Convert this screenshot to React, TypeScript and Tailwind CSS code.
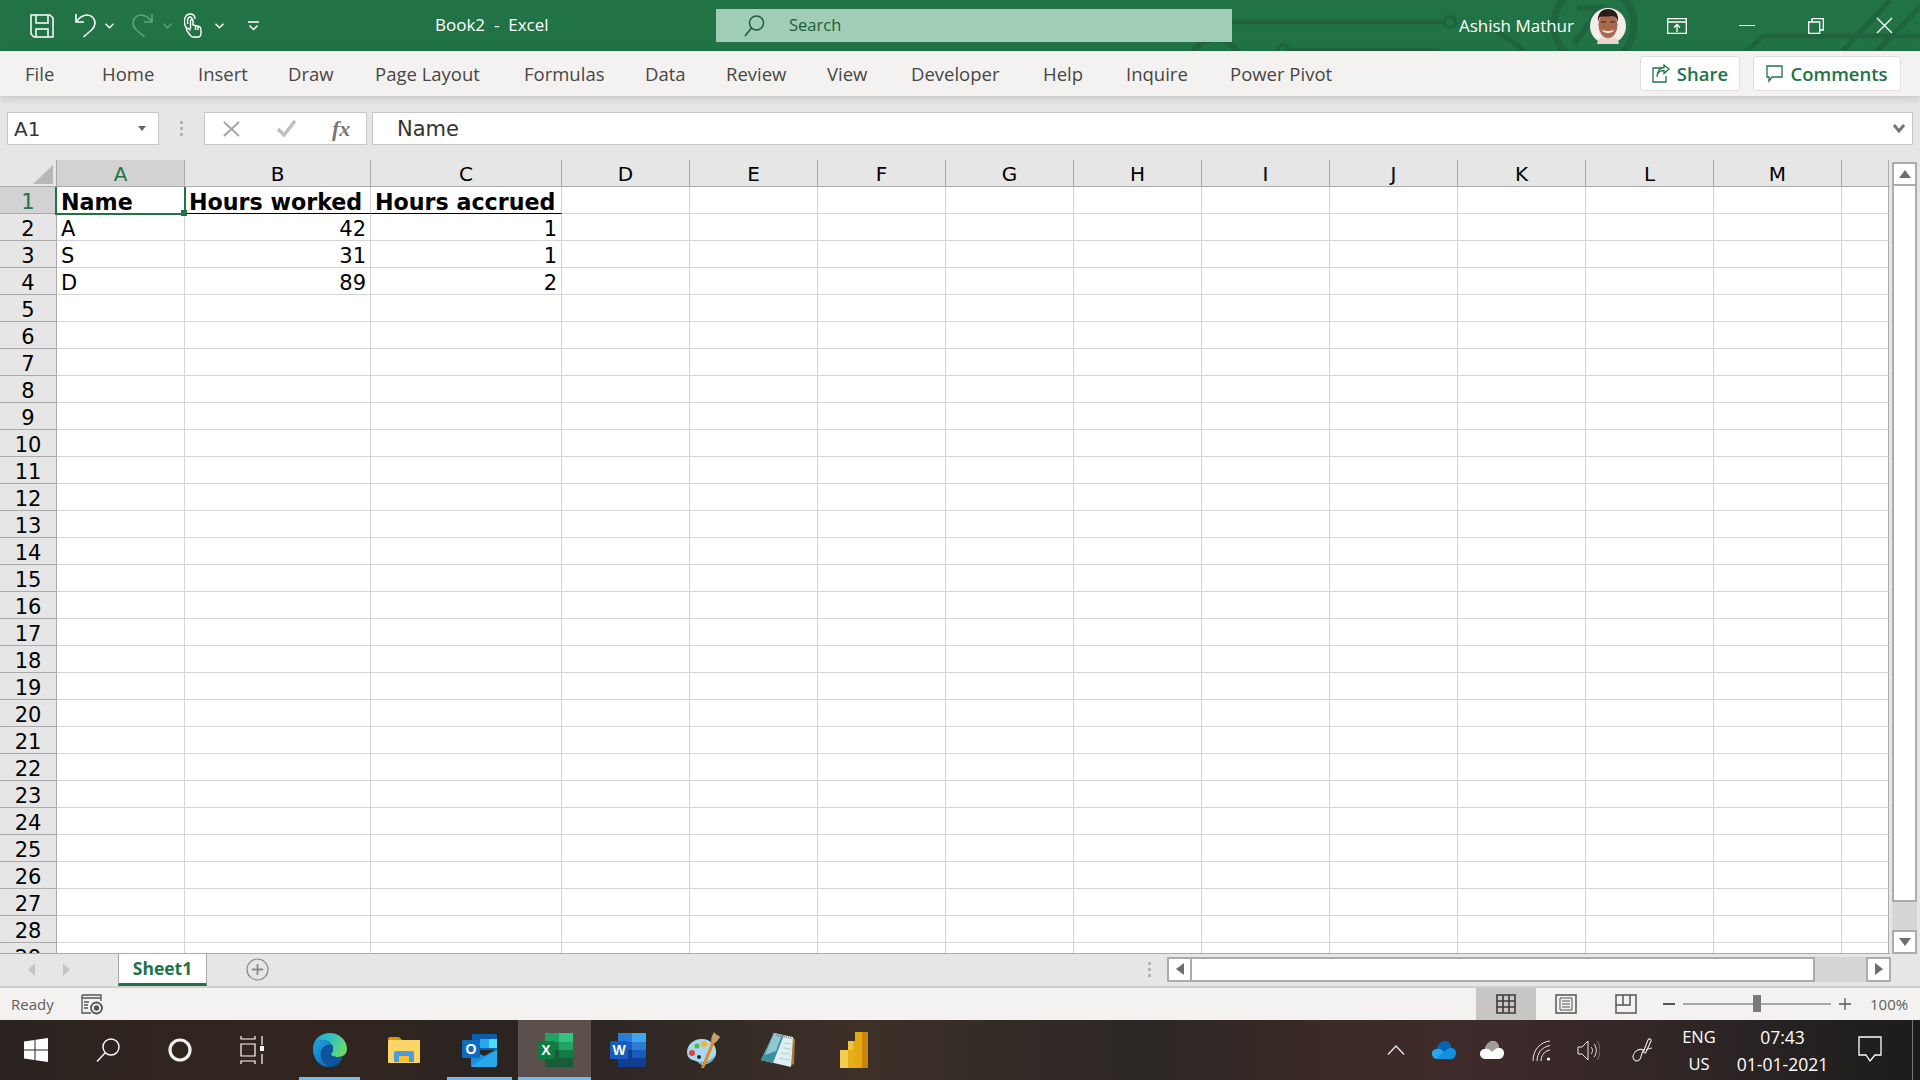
import { ReactNode } from "react"

const columns = [
  { label: "A", width: "w-[128px]", active: true },
  { label: "B", width: "w-[186px]" },
  { label: "C", width: "w-[191px]" },
  { label: "D", width: "w-[128px]" },
  { label: "E", width: "w-[128px]" },
  { label: "F", width: "w-[128px]" },
  { label: "G", width: "w-[128px]" },
  { label: "H", width: "w-[128px]" },
  { label: "I", width: "w-[128px]" },
  { label: "J", width: "w-[128px]" },
  { label: "K", width: "w-[128px]" },
  { label: "L", width: "w-[128px]" },
  { label: "M", width: "w-[128px]" },
  { label: "", width: "w-[47px]" },
]

const sheetData: Record<number, (string | number)[]> = {
  1: ["Name", "Hours worked", "Hours accrued"],
  2: ["A", 42, 1],
  3: ["S", 31, 1],
  4: ["D", 89, 2],
}

const tabs = [
  { label: "File", width: "w-[77px]" },
  { label: "Home", width: "w-[96px]" },
  { label: "Insert", width: "w-[90px]" },
  { label: "Draw", width: "w-[87px]" },
  { label: "Page Layout", width: "w-[149px]" },
  { label: "Formulas", width: "w-[121px]" },
  { label: "Data", width: "w-[81px]" },
  { label: "Review", width: "w-[101px]" },
  { label: "View", width: "w-[84px]" },
  { label: "Developer", width: "w-[132px]" },
  { label: "Help", width: "w-[83px]" },
  { label: "Inquire", width: "w-[104px]" },
  { label: "Power Pivot", width: "w-[130px]" },
]

function Chevron({ className = "" }: { className?: string }) {
  return (
    <svg width="9" height="6" viewBox="0 0 9 6" className={className}>
      <path d="M0.5 0.7 L4.5 4.7 L8.5 0.7" fill="none" stroke="currentColor" strokeWidth="1.4" />
    </svg>
  )
}

function UndoIcon({ flip = false }: { flip?: boolean }) {
  return (
    <svg width="23" height="25" viewBox="0 0 23 25" className={flip ? "-scale-x-100" : ""}>
      <path
        d="M2 1V9H10 M2 9C5 5 9 2 13 2C18 2 21 6 21 10C21 13 19.5 15 18 16.5L9.5 24"
        fill="none"
        stroke="currentColor"
        strokeWidth="1.6"
      />
    </svg>
  )
}

function TitleBar() {
  return (
    <header className="relative h-[51px] shrink-0 overflow-hidden bg-[#217346] text-white">
      {/* circuit pattern */}
      <svg className="absolute inset-0" width="1920" height="51" viewBox="0 0 1920 51" fill="none" stroke="#20643f">
        <path d="M1232 22H1445" strokeWidth="5" />
        <circle cx="1450" cy="22" r="5.5" strokeWidth="3.5" />
        <circle cx="1215" cy="64" r="25" strokeWidth="6" />
        <circle cx="1283" cy="50" r="5.5" strokeWidth="3.5" />
        <path d="M1290 50H1436L1440 51" strokeWidth="4" />
        <path d="M1497 31L1525 51" strokeWidth="5" />
        <circle cx="1594" cy="25" r="40" strokeWidth="7" />
        <path d="M1577 8H1600L1574 44" strokeWidth="6" />
        <path d="M1746 52L1763 36H1920" strokeWidth="5" />
        <path d="M1843 51L1890 0M1877 51L1922 5" strokeWidth="5" />
      </svg>

      <div className="relative flex h-full items-center">
        <div className="flex w-[435px] items-center pl-[30px]">
          <svg width="24" height="24" viewBox="0 0 24 24" fill="none" stroke="currentColor" strokeWidth="1.5">
            <path d="M1 1H20L23 4V23H4L1 20Z" />
            <path d="M6 1V9H18V1M6 23V15H18V23" />
          </svg>
          <div className="ml-[20px]"><UndoIcon /></div>
          <Chevron className="ml-[8px]" />
          <div className="ml-[17px] text-[#5fa27e]"><UndoIcon flip /></div>
          <Chevron className="ml-[9px] text-[#5fa27e]" />
          <svg className="ml-[12px]" width="18" height="25" viewBox="0 0 18 25" fill="none" stroke="currentColor" strokeWidth="1.4">
            <path d="M3 16C0 12 0 8 1 5C2 2 4 1 6 1C9 1 11 3 11 6" />
            <path d="M4 11C3 8 3.5 4 6 4C8 4 8.5 6 8.5 8" />
            <path d="M6.5 16V7.5C6.5 6 9 6 9 7.5V12L15 13.5C16.5 14 17 15 17 16.5V20C17 22 16 24 14 24H9C7 24 6 22 4.5 20L2.5 17C2 15.5 4 14.5 5 16L6.5 17.5" />
            <path d="M11.5 13V17M14 13.5V17" />
          </svg>
          <Chevron className="ml-[13px]" />
          <svg className="ml-[24px]" width="11" height="10" viewBox="0 0 11 10" fill="none" stroke="currentColor" strokeWidth="1.5">
            <path d="M0 1H11M1.5 4.5L5.5 8.5L9.5 4.5" />
          </svg>
        </div>
        <div className="w-[281px] pb-[2px] text-[17px]">Book2&nbsp; -&nbsp; Excel</div>
        <div className="flex h-[33px] w-[516px] items-center bg-[#a0cdb5] text-[16.5px] text-[#1d5c3a]">
          <svg className="ml-[28px]" width="21" height="22" viewBox="0 0 21 22" fill="none" stroke="currentColor" strokeWidth="1.5">
            <circle cx="12.5" cy="8" r="7" />
            <path d="M7.5 13L1 21" />
          </svg>
          <span className="ml-[24px]">Search</span>
        </div>
        <div className="ml-auto flex items-center pr-[27px]">
          <span className="text-[17px]">Ashish Mathur</span>
          <svg className="ml-[16px]" width="36" height="36" viewBox="0 0 36 36">
            <circle cx="18" cy="18" r="18" fill="#f4ece8" />
            <path d="M7 36C8 29 13 28 18 28C23 28 28 29 29 36Z" fill="#e9d6d0" />
            <ellipse cx="18" cy="17" rx="9.5" ry="13" fill="#a8694e" />
            <path d="M8 14C7 5 12 1 18 1C25 1 29 6 28 14C27 10 25 8 22 8C18 9 12 8 10 9C9 10 8.5 12 8 14Z" fill="#2b1c1e" />
            <path d="M11 14H16M20 14H25" stroke="#5c3a30" strokeWidth="1.5" />
            <path d="M12.5 22.5C15 25 21 25 23.5 22.5C21 24 15 24 12.5 22.5Z" fill="#f7eee9" stroke="#f7eee9" />
          </svg>
          <svg className="ml-[41px]" width="20" height="16" viewBox="0 0 20 16" fill="none" stroke="currentColor" strokeWidth="1.3">
            <path d="M0.7 0.7H19.3V15.3H0.7ZM0.7 4H19.3" />
            <path d="M10 14V7M7 9.5L10 6.5L13 9.5" />
          </svg>
          <div className="ml-[52px] h-[1.5px] w-[16px] bg-white" />
          <svg className="ml-[53px]" width="16" height="16" viewBox="0 0 16 16" fill="none" stroke="currentColor" strokeWidth="1.3">
            <path d="M0.7 4H11.7V15.3H0.7ZM4 4V0.7H15.3V12H11.7" />
          </svg>
          <svg className="ml-[52px]" width="17" height="17" viewBox="0 0 17 17" fill="none" stroke="currentColor" strokeWidth="1.4">
            <path d="M1 1L16 16M16 1L1 16" />
          </svg>
        </div>
      </div>
    </header>
  )
}

function Ribbon() {
  return (
    <nav className="relative z-10 flex h-[45px] shrink-0 items-center bg-[#f3f2f1] pl-[25px] pr-[19px] shadow-[0_3px_8px_rgba(0,0,0,0.14)]">
      {tabs.map((t) => (
        <div key={t.label} className={`${t.width} whitespace-nowrap text-[18.5px] text-[#484644]`}>
          {t.label}
        </div>
      ))}
      <div className="ml-auto flex gap-[13px]">
        <button className="flex h-[35px] w-[100px] items-center justify-center gap-[7px] rounded-[3px] border border-[#e1dfdd] bg-white text-[18.5px] font-semibold text-[#217346]">
          <svg width="18" height="19" viewBox="0 0 18 19" fill="none" stroke="currentColor" strokeWidth="1.3">
            <path d="M9 4H1V18H14V12" />
            <path d="M5 13C5 9 8 6.5 12 6.5V9.5L17 5L12 1V3.5C7.5 3.5 5 8 5 13Z" />
          </svg>
          Share
        </button>
        <button className="flex h-[35px] w-[148px] items-center justify-center gap-[7px] rounded-[3px] border border-[#e1dfdd] bg-white text-[18.5px] font-semibold text-[#217346]">
          <svg width="17" height="18" viewBox="0 0 17 18" fill="none" stroke="currentColor" strokeWidth="1.3">
            <path d="M1 1H16V12H6L3 16V12H1Z" />
          </svg>
          Comments
        </button>
      </div>
    </nav>
  )
}

function FormulaBar() {
  return (
    <div className="flex h-[64px] shrink-0 items-start bg-[#e6e6e6] pl-[7px] pr-[7px] pt-[16px]">
      <div className="flex h-[33px] w-[152px] items-center justify-between border border-[#c6c6c6] bg-white pl-[6px] pr-[12px] font-['DejaVu_Sans',sans-serif] text-[20px] text-[#333]">
        A1
        <svg width="8" height="5" viewBox="0 0 8 5"><path d="M0 0H8L4 5Z" fill="#666" /></svg>
      </div>
      <div className="flex h-[33px] w-[45px] flex-col items-center justify-center gap-[3px]">
        <div className="h-[3px] w-[3px] bg-[#b5b5b5]" />
        <div className="h-[3px] w-[3px] bg-[#b5b5b5]" />
        <div className="h-[3px] w-[3px] bg-[#b5b5b5]" />
      </div>
      <div className="flex h-[33px] w-[163px] items-center border border-[#c6c6c6] bg-white pl-[18px]">
        <svg width="17" height="16" viewBox="0 0 17 16" fill="none" stroke="#a6a6a6" strokeWidth="2"><path d="M1 1L16 15M16 1L1 15" /></svg>
        <svg className="ml-[37px]" width="20" height="17" viewBox="0 0 20 17" fill="none" stroke="#c0c0c0" strokeWidth="3.5"><path d="M1 9L7 15L18 1" /></svg>
        <span className="ml-[35px] font-['Liberation_Serif',serif] text-[22px] font-semibold italic leading-none text-[#777]">fx</span>
      </div>
      <div className="ml-[5px] flex h-[33px] flex-1 items-center justify-between border border-[#c6c6c6] bg-white pl-[24px] pr-[7px] font-['DejaVu_Sans',sans-serif] text-[21px] text-[#333]">
        <span className="pt-[2px]">Name</span>
        <svg width="12" height="9" viewBox="0 0 12 9" fill="none" stroke="#777" strokeWidth="3"><path d="M1 1L6 7L11 1" /></svg>
      </div>
    </div>
  )
}

function ColumnHeader() {
  return (
    <div className="flex h-[27px] shrink-0 border-b border-[#ababab] bg-[#e6e6e6] font-['DejaVu_Sans',sans-serif] text-[20px] leading-[26px]">
      <div className="flex w-[57px] items-end justify-end border-r border-[#ababab] pb-[2px] pr-[3px]">
        <svg width="20" height="19" viewBox="0 0 20 19"><path d="M20 0V19H0Z" fill="#b8b8b8" /></svg>
      </div>
      {columns.map((c, i) => (
        <div
          key={i}
          className={`${c.width} border-r border-[#ababab] pt-[1px] text-center ${c.active ? "bg-[#d2d2d2] text-[#217346]" : "text-black"}`}
        >
          {c.label}
        </div>
      ))}
    </div>
  )
}

function Row({ n }: { n: number }) {
  const values = sheetData[n] ?? []
  return (
    <div className="flex h-[27px] shrink-0">
      <div
        className={`flex w-[57px] shrink-0 items-center justify-center border-b border-r border-[#ababab] pt-[5px] text-[21px] ${n === 1 ? "bg-[#d2d2d2] text-[#217346]" : "bg-[#e6e6e6] text-black"}`}
      >
        {n}
      </div>
      {columns.map((c, i) => {
        const v = values[i]
        return (
          <div
            key={i}
            className={`relative flex shrink-0 items-center whitespace-nowrap border-b border-r bg-white px-[4px] pt-[5px] ${c.width} ${n === 1 && i < 3 ? "border-b-black" : "border-b-[#d4d4d4]"} ${i === 13 ? "border-r-[#ababab]" : "border-r-[#d4d4d4]"} ${n === 1 ? "text-[22.2px] font-bold" : "text-[21px]"} ${typeof v === "number" ? "justify-end" : ""} text-black`}
          >
            {v}
            {n === 1 && i === 0 && (
              <div className="absolute -left-[2px] -top-[2px] z-10 h-[30px] w-[131px] border-2 border-[#217346]">
                <div className="absolute -bottom-[3px] -right-[3px] h-[6px] w-[6px] bg-[#217346]" />
              </div>
            )}
          </div>
        )
      })}
    </div>
  )
}

function ScrollArrow({ dir }: { dir: "up" | "down" | "left" | "right" }) {
  const points = { up: "0,8 12,8 6,0", down: "0,0 12,0 6,8", left: "8,0 8,12 0,6", right: "0,0 0,12 8,6" }
  return (
    <svg width="12" height="12" viewBox="0 0 12 12">
      <polygon points={points[dir]} transform={dir === "left" || dir === "right" ? "translate(2,0)" : "translate(0,2)"} fill="#6d6d6d" />
    </svg>
  )
}

function Grid() {
  const rows = Array.from({ length: 29 }, (_, i) => i + 1)
  return (
    <div className="flex h-[794px] shrink-0 flex-col overflow-hidden bg-[#e6e6e6]">
      <div className="flex h-full">
        <div className="flex w-[1890px] flex-col font-['DejaVu_Sans',sans-serif]">
          <ColumnHeader />
          <div className="h-[767px] overflow-hidden border-b border-[#ababab]">
            {rows.map((n) => (
              <Row key={n} n={n} />
            ))}
          </div>
        </div>
        <div className="flex h-full w-[30px] flex-col pl-[2px] pr-[3px] pt-[2px]">
          <div className="flex h-[24px] items-center justify-center border-2 border-[#ababab] border-b-[#ababab] bg-white">
            <ScrollArrow dir="up" />
          </div>
          <div className="h-[716px] border-x-2 border-b-2 border-[#ababab] bg-white" />
          <div className="flex-1 bg-[#d6d6d6]" />
          <div className="flex h-[24px] items-center justify-center border-2 border-[#ababab] bg-white">
            <ScrollArrow dir="down" />
          </div>
        </div>
      </div>
    </div>
  )
}

function SheetTabs() {
  return (
    <div className="flex h-[34px] shrink-0 items-center border-b-2 border-[#cfcfcf] bg-[#e6e6e6] pb-[2px]">
      <svg className="ml-[28px]" width="7" height="13" viewBox="0 0 7 13"><path d="M7 0V13L0 6.5Z" fill="#c4c4c4" /></svg>
      <svg className="ml-[28px]" width="7" height="13" viewBox="0 0 7 13"><path d="M0 0V13L7 6.5Z" fill="#c4c4c4" /></svg>
      <div className="ml-[48px] flex h-[32px] w-[89px] items-center justify-center self-start border-x border-b-[3px] border-[#a6a6a6] border-b-[#217346] bg-white text-[17.5px] font-bold text-[#217346]">
        Sheet1
      </div>
      <svg className="ml-[39px]" width="23" height="23" viewBox="0 0 23 23" fill="none" stroke="#8a8a8a">
        <circle cx="11.5" cy="11.5" r="10.5" strokeWidth="1.2" />
        <path d="M11.5 6V17M6 11.5H17" strokeWidth="1.8" />
      </svg>
      <div className="ml-[879px] flex flex-col gap-[3px]">
        <div className="h-[3px] w-[3px] bg-[#b5b5b5]" />
        <div className="h-[3px] w-[3px] bg-[#b5b5b5]" />
        <div className="h-[3px] w-[3px] bg-[#b5b5b5]" />
      </div>
      <div className="ml-[16px] flex h-[25px] items-stretch">
        <div className="flex w-[25px] items-center justify-center border-2 border-[#ababab] bg-white">
          <ScrollArrow dir="left" />
        </div>
        <div className="w-[623px] border-y-2 border-r-2 border-[#ababab] bg-white" />
        <div className="w-[51px] bg-[#d6d6d6]" />
        <div className="flex w-[25px] items-center justify-center border-2 border-[#ababab] bg-white">
          <ScrollArrow dir="right" />
        </div>
      </div>
    </div>
  )
}

function StatusBar() {
  return (
    <div className="flex h-[32px] shrink-0 items-center bg-[#f3f2f1] pl-[11px] text-[15px] text-[#605e5c]">
      <span className="w-[70px]">Ready</span>
      <svg width="22" height="21" viewBox="0 0 22 21" fill="none" stroke="#555" strokeWidth="1.3">
        <path d="M1 1H20V7M1 4H20M1 1V19H10" />
        <path d="M3 8H8M3 11H7M3 14H7" />
        <circle cx="15.5" cy="14" r="5.5" strokeWidth="1.8" />
        <circle cx="15.5" cy="14" r="2" fill="#555" />
      </svg>
      <div className="ml-auto flex h-full items-center">
        <div className="flex h-full w-[60px] items-center justify-center bg-[#c8c6c4]">
          <svg width="20" height="20" viewBox="0 0 20 20" fill="none" stroke="#3b3a39" strokeWidth="1.6">
            <path d="M1 1H19V19H1ZM7 1V19M13 1V19M1 7H19M1 13H19" />
          </svg>
        </div>
        <div className="flex h-full w-[60px] items-center justify-center">
          <svg width="22" height="20" viewBox="0 0 22 20" fill="none" stroke="#555">
            <path d="M1 1H21V19H1Z" strokeWidth="1.5" />
            <path d="M5 4H17V16H5Z" strokeWidth="1" />
            <path d="M7 7H15M7 10H15M7 13H15" strokeWidth="1.2" />
          </svg>
        </div>
        <div className="flex h-full w-[60px] items-center justify-center">
          <svg width="22" height="20" viewBox="0 0 22 20" fill="none" stroke="#555" strokeWidth="1.5">
            <path d="M1 1H21V19H1ZM8 1V11H1M8 11H15V1" />
          </svg>
        </div>
        <div className="ml-[7px] h-[1.5px] w-[12px] bg-[#555]" />
        <div className="relative ml-[8px] flex h-[2px] w-[148px] bg-[#a8a8a8]">
          <div className="absolute left-[70px] -top-[8px] h-[17px] w-[8px] bg-[#7a7a7a]" />
        </div>
        <svg className="ml-[8px]" width="12" height="12" viewBox="0 0 12 12" stroke="#555" strokeWidth="1.3"><path d="M6 0V12M0 6H12" /></svg>
        <span className="ml-[19px] w-[50px] text-[15px]">100%</span>
      </div>
    </div>
  )
}

function EdgeLogo() {
  return (
    <svg width="36" height="36" viewBox="0 0 36 36">
      <defs>
        <linearGradient id="edgeTop" x1="0" y1="0" x2="1" y2="0.3">
          <stop offset="0" stopColor="#1b9de2" />
          <stop offset="0.55" stopColor="#35c1c0" />
          <stop offset="1" stopColor="#66d86e" />
        </linearGradient>
        <linearGradient id="edgeLeft" x1="0" y1="0" x2="0.6" y2="1">
          <stop offset="0" stopColor="#1fa5e8" />
          <stop offset="1" stopColor="#0d6ebd" />
        </linearGradient>
      </defs>
      <path d="M18 1C27 1 35 8 35 17C35 22 31 25 26 25C22 25 19 24 19 22C19 21 21 20 21 17C21 12 16 8 11 8C7 8 3 10 1 15C2 7 9 1 18 1Z" fill="url(#edgeTop)" />
      <path d="M1 15C3 10 7 8 11 8C14 8 18 10 20 13C15 12 10 15 9 20C8 26 12 33 19 35C9 36 0 28 1 15Z" fill="url(#edgeLeft)" />
      <path d="M9 20C10 15 15 12 20 13C21 14 21 15 21 17C21 20 19 21 19 22C19 24 22 25 26 25C28 25 30 25 31 24C29 31 24 35 19 35C12 33 8 26 9 20Z" fill="#0c559e" />
    </svg>
  )
}

function FolderLogo() {
  return (
    <svg width="32" height="26" viewBox="0 0 32 26">
      <path d="M0 2C0 1 1 0 2 0H11L14 3H32V5H0Z" fill="#d9980a" />
      <rect x="0" y="3" width="32" height="23" rx="1" fill="#fcd565" />
      <path d="M6 25V16C6 15 7 14 8 14H24C25 14 26 15 26 16V25H21V19H11V25Z" fill="#4a9cdc" />
      <rect x="11" y="19" width="10" height="6" fill="#fbc02d" />
    </svg>
  )
}

function OutlookLogo() {
  return (
    <svg width="36" height="34" viewBox="0 0 36 34">
      <rect x="10" y="1" width="25" height="16" fill="#0a5cb0" rx="1" />
      <rect x="18" y="6" width="9" height="9" fill="#28a8ea" />
      <rect x="27" y="6" width="8" height="9" fill="#50d9ff" />
      <rect x="10" y="9" width="8" height="8" fill="#0f78d4" />
      <path d="M9 16L22 23L35 16V32C35 33 34 34 33 34H11C10 34 9 33 9 32Z" fill="#1490df" />
      <path d="M9 33L35 17V32C35 33 34 34 33 34H11C10 34 9 34 9 33Z" fill="#28a8ea" />
      <rect x="0" y="7" width="18" height="18" rx="1.5" fill="#0f6cbd" />
      <text x="9" y="21" textAnchor="middle" fontFamily="'Liberation Sans', sans-serif" fontWeight="700" fontSize="14" fill="#fff">O</text>
    </svg>
  )
}

function OfficeLogo({ letter, colors, dark }: { letter: string; colors: string[]; dark: string }) {
  return (
    <svg width="36" height="34" viewBox="0 0 36 34">
      <rect x="8" y="0" width="28" height="34" rx="1.5" fill={colors[1]} />
      <rect x="22" y="0" width="14" height="9" fill={colors[0]} />
      <rect x="8" y="0" width="14" height="9" fill={colors[1]} />
      <rect x="22" y="9" width="14" height="8" fill={colors[1]} />
      <rect x="8" y="9" width="14" height="8" fill={colors[2]} />
      <rect x="22" y="17" width="14" height="8" fill={colors[2]} />
      <rect x="8" y="17" width="14" height="8" fill={colors[3]} />
      <rect x="8" y="25" width="28" height="9" fill={colors[3]} />
      <rect x="0" y="8" width="18" height="18" rx="1.5" fill={dark} />
      <text x="9" y="22" textAnchor="middle" fontFamily="'Liberation Sans', sans-serif" fontWeight="700" fontSize="14" fill="#fff">{letter}</text>
    </svg>
  )
}

function PaintLogo() {
  return (
    <svg width="36" height="36" viewBox="0 0 36 36">
      <path d="M2 20C2 12 10 6 18 7C27 8 32 14 31 22C30 28 24 32 18 33C15 33 14 30 11 29C6 28 2 26 2 20Z" fill="#a9d8ef" />
      <path d="M18 33C24 32 30 28 31 22C28 27 23 30 14 30C15 32 16 33 18 33Z" fill="#6eaed0" />
      <circle cx="7" cy="21" r="3" fill="#e2433e" />
      <circle cx="12" cy="14" r="2.6" fill="#5bb54a" />
      <circle cx="19" cy="12" r="3" fill="#f2b12e" />
      <circle cx="14" cy="25" r="2" fill="#1f2a33" />
      <path d="M16 36L27 9L30 10L19 36Z" fill="#e88a1f" />
      <path d="M26 9C26 5 28 2 29 0C31 3 35 4 35 5C33 8 31 11 29 11Z" fill="#c9a06a" />
    </svg>
  )
}

function NotepadLogo() {
  return (
    <svg width="34" height="34" viewBox="0 0 34 34">
      <path d="M31 4L34 6L33 31L29 33Z" fill="#a67c2e" />
      <path d="M13 0L32 4L30 34L0 27Z" fill="#dfeef2" />
      <path d="M13 0L23 2L12 30L0 27Z" fill="#3a8f9f" />
      <path d="M13 0L21 2L15 18L4 22Z" fill="#8ec7d1" />
      <path d="M15 2L31 5" stroke="#8a8a8a" strokeWidth="2" strokeDasharray="1 1" />
      <path d="M23 10L30 11M22 15L30 16M20 20L29 21M18 25L29 27" stroke="#b5cfd6" strokeWidth="1.2" />
    </svg>
  )
}

function PowerBiLogo() {
  return (
    <svg className="ml-[4px]" width="28" height="36" viewBox="0 0 28 36">
      <rect x="0" y="18" width="12" height="18" fill="#f2cf52" />
      <rect x="8" y="9" width="12" height="27" fill="#e8ae1a" />
      <rect x="15" y="0" width="13" height="36" fill="#c9850e" />
      <rect x="15" y="0" width="7" height="36" fill="#e3a70f" />
      <rect x="8" y="9" width="5" height="9" fill="#f0c43a" />
    </svg>
  )
}

function TaskSlot({ width, active, open, children }: { width: string; active?: boolean; open?: boolean; children: ReactNode }) {
  return (
    <div className={`relative flex h-full items-center justify-center pb-[1px] ${width} ${active ? "bg-[#5b504c]" : ""}`}>
      {children}
      {open && <div className={`absolute bottom-0 h-[3px] bg-[#76b9ed] ${active ? "inset-x-0" : "inset-x-[6px]"}`} />}
    </div>
  )
}

function Taskbar() {
  return (
    <footer className="flex h-[60px] shrink-0 items-center bg-[linear-gradient(90deg,#2b2320_0%,#33251f_14%,#2a2422_28%,#3d3029_45%,#2c2724_60%,#3d2b27_70%,#3e2a2b_78%,#2c2424_90%,#1c1c1c_100%)] font-['Open_Sans',sans-serif] text-white">
      <TaskSlot width="w-[72px]">
        <svg width="24" height="24" viewBox="0 0 24 24" fill="#fff"><path d="M0 3.5L10.5 2V11.5H0ZM11.5 1.8L24 0V11.5H11.5ZM0 12.5H10.5V22L0 20.5ZM11.5 12.5H24V24L11.5 22.2Z" /></svg>
      </TaskSlot>
      <TaskSlot width="w-[72px]">
        <svg width="24" height="24" viewBox="0 0 24 24" fill="none" stroke="#fff" strokeWidth="1.4"><circle cx="15" cy="9" r="8" /><path d="M9 15L1 23.5" /></svg>
      </TaskSlot>
      <TaskSlot width="w-[72px]">
        <svg width="24" height="24" viewBox="0 0 24 24" fill="none" stroke="#f0f0f0" strokeWidth="3.2"><circle cx="12" cy="12" r="10" /></svg>
      </TaskSlot>
      <TaskSlot width="w-[71px]">
        <svg width="24" height="28" viewBox="0 0 24 28" fill="none" stroke="#fff" strokeWidth="1.2">
          <path d="M1 0V3H15V0M1 8H15V20H1ZM1 28V25H15V28M22 0V9M22 18V28" />
          <rect x="20" y="10" width="4" height="5" fill="#fff" stroke="none" />
        </svg>
      </TaskSlot>
      <div className="w-[6px]" />
      <TaskSlot width="w-[73px]" open><EdgeLogo /></TaskSlot>
      <TaskSlot width="w-[75px]"><FolderLogo /></TaskSlot>
      <TaskSlot width="w-[77px]" open><OutlookLogo /></TaskSlot>
      <TaskSlot width="w-[73px]" active open>
        <OfficeLogo letter="X" colors={["#33c481", "#21a366", "#107c41", "#185c37"]} dark="#107c41" />
      </TaskSlot>
      <TaskSlot width="w-[74px]">
        <OfficeLogo letter="W" colors={["#41a5ee", "#2b7cd3", "#185abd", "#103f91"]} dark="#185abd" />
      </TaskSlot>
      <TaskSlot width="w-[76px]"><PaintLogo /></TaskSlot>
      <TaskSlot width="w-[73px]"><NotepadLogo /></TaskSlot>
      <TaskSlot width="w-[76px]"><PowerBiLogo /></TaskSlot>

      <div className="ml-auto flex h-full items-center pr-[7px]">
        <svg width="18" height="10" viewBox="0 0 18 10" fill="none" stroke="#e8e8e8" strokeWidth="1.3"><path d="M1 9.5L9 1L17 9.5" /></svg>
        <svg className="ml-[27px]" width="24" height="18" viewBox="0 0 24 18">
          <path d="M5 8C6 3 10 0 13 0C16 0 19 3 19 7C22 7 24 9 24 12C24 15 22 18 19 18H5C2 18 0 15 0 13C0 10 2 8 5 8Z" fill="#1490df" />
          <path d="M5 8C8 7 10 9 12 11L4 18C2 17 0 15 0 13C0 10 2 8 5 8Z" fill="#28a8ea" />
          <path d="M5 8C6 3 10 0 13 0C16 0 18 3 19 7C16 7 14 9 12 11C10 9 8 7 5 8Z" fill="#0364b8" />
        </svg>
        <svg className="ml-[24px]" width="24" height="18" viewBox="0 0 24 18">
          <path d="M5 8C6 3 10 0 13 0C16 0 19 3 19 7C22 7 24 9 24 12C24 15 22 18 19 18H5C2 18 0 15 0 13C0 10 2 8 5 8Z" fill="#fff" />
          <path d="M5 8C6 3 10 0 13 0C16 0 18 3 19 7C16 7 14 9 12 11C10 9 8 7 5 8Z" fill="#a09a98" />
        </svg>
        <svg className="ml-[28px]" width="19" height="21" viewBox="0 0 19 21" fill="none" stroke="#e8e8e8" strokeWidth="1">
          <path d="M1 21C1 10 8 2 18 1M5 21C5 13 10 7 18 5.5M9 21C9 16 12 11 18 10" />
          <circle cx="16.5" cy="19" r="1.6" fill="#fff" stroke="none" />
        </svg>
        <svg className="ml-[26px]" width="23" height="23" viewBox="0 0 23 23" fill="none" stroke="#e8e8e8" strokeWidth="1">
          <path d="M1 8H5L11 2V21L5 15H1Z" />
          <path d="M14 8C16 10 16 13 14 15M17 5C20 8 20 15 17 18" />
          <path d="M20 2C24 7 24 16 20 21" stroke="#7a7474" />
        </svg>
        <svg className="ml-[32px]" width="20" height="24" viewBox="0 0 20 24" fill="none" stroke="#e8e8e8" strokeWidth="1.1">
          <path d="M12 12L16 2C17 0 19.5 1 19 3L14 14C13 16 11 15 12 12Z" />
          <path d="M14 12C16 11 18 10 20 10M12 12C7 10 2 13 1 18C0.5 22 5 25 8 21C10 18 9 14 12 12Z" />
        </svg>
        <div className="ml-[30px] flex w-[34px] flex-col items-center gap-[5px] text-[16.5px] leading-[22px]">
          <span>ENG</span>
          <span>US</span>
        </div>
        <div className="ml-[20px] flex w-[93px] flex-col items-center gap-[5px] whitespace-nowrap text-[17.5px] leading-[22px]">
          <span>07:43</span>
          <span>01-01-2021</span>
        </div>
        <svg className="ml-[29px]" width="24" height="28" viewBox="0 0 24 28" fill="none" stroke="#fff" strokeWidth="1.3">
          <path d="M1 1H23V19H17L12 25L8 19H1Z" />
        </svg>
        <div className="ml-[30px] h-full w-[1px] bg-[#777]" />
      </div>
    </footer>
  )
}

export default function App() {
  return (
    <div className="flex h-[1080px] w-[1920px] flex-col overflow-hidden bg-[#e6e6e6] font-['Open_Sans',sans-serif]">
      <TitleBar />
      <Ribbon />
      <FormulaBar />
      <Grid />
      <SheetTabs />
      <StatusBar />
      <Taskbar />
    </div>
  )
}
